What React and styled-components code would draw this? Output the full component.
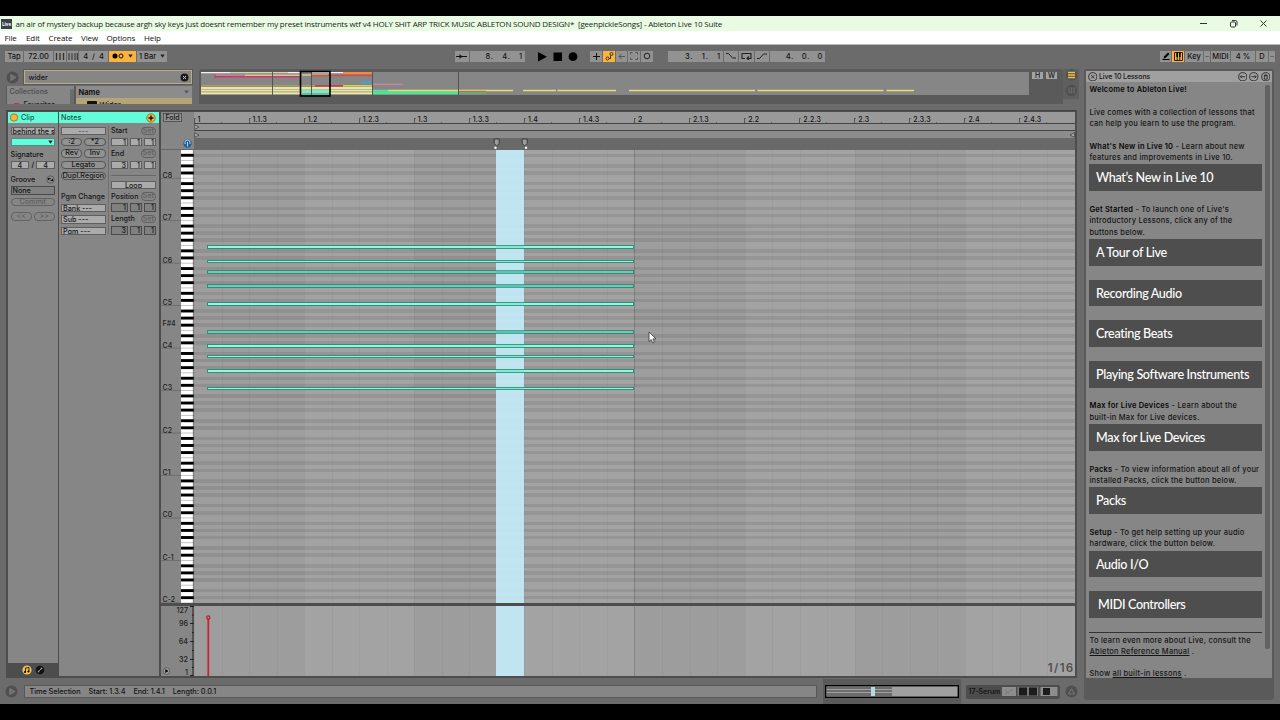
import React from 'react';
import styled, { createGlobalStyle } from 'styled-components';

const GlobalStyle = createGlobalStyle`
  * {
    box-sizing: border-box;
  }
  body {
    margin: 0;
    background: #000;
    font-family: Inter, 'Liberation Sans', sans-serif;
    font-size: 7.5px;
    font-weight: 500;
    color: #151515;
    overflow: hidden;
  }
  svg {
    display: block;
    flex: none;
  }
`;

const SEMI = 453 / 128;
const BEAT = 881 / 8;

/* ---------- window ---------- */

const Screen = styled.div`
  width: 1280px;
  height: 720px;
  padding: 16px 0;
  background: #000;
  overflow: hidden;
`;

const TitleBar = styled.div`
  height: 15px;
  background: #e9fbe3;
  display: flex;
  align-items: center;
  padding-left: 1px;
  font-family: 'Open Sans', sans-serif;
  font-weight: 400;
  font-size: 8px;
  color: #1c1c1c;
`;

const AppIcon = styled.div`
  width: 11px;
  height: 10px;
  background: #3a4148;
  color: #fff;
  font-size: 4.5px;
  font-weight: 700;
  line-height: 10px;
  text-align: center;
  margin-right: 3.5px;
`;

const Title = styled.div`
  flex: 1;
  white-space: pre;
  letter-spacing: -0.185px;
`;

const WindowButtons = styled.div`
  display: flex;
  gap: 21px;
  padding-right: 12.5px;
`;

const MenuBar = styled.div`
  height: 14px;
  background: #fff;
  border-bottom: 1px solid #bbb;
  display: flex;
  align-items: center;
  padding-left: 4.5px;
  font-family: 'Open Sans', sans-serif;
  font-weight: 400;
  font-size: 8px;
  letter-spacing: -0.1px;
  color: #111;
`;

const MenuItem = styled.div`
  width: ${(p) => p.$w}px;
`;

const Body = styled.div`
  height: 659px;
  background: #6b6b6b;
  display: flex;
  flex-direction: column;
`;

/* ---------- control bar ---------- */

const Toolbar = styled.div`
  height: 24px;
  flex: none;
  display: flex;
  align-items: center;
  padding: 0 5px 2px;
`;

const Group = styled.div`
  display: flex;
  gap: 1px;
  margin-left: ${(p) => p.$ml || 0}px;
`;

const Ctl = styled.div`
  width: ${(p) => p.$w}px;
  height: 11px;
  background: ${(p) => (p.$on ? '#fbb33c' : '#929292')};
  color: ${(p) => (p.$dim ? '#555' : '#151515')};
  display: flex;
  align-items: center;
  justify-content: ${(p) => p.$align || 'center'};
  padding-right: ${(p) => p.$pr || 0}px;
  gap: 2px;
  white-space: pre;
  letter-spacing: ${(p) => p.$track || 0}px;
`;

/* ---------- main split ---------- */

const Split = styled.div`
  flex: 1;
  min-height: 0;
  display: flex;
`;

const LeftSide = styled.div`
  width: 1084px;
  display: flex;
  flex-direction: column;
`;

const TopStrip = styled.div`
  height: 35px;
  display: flex;
  padding-left: 5.5px;
  overflow: hidden;
`;

const Browser = styled.div`
  width: 186px;
  display: flex;
  flex-direction: column;
`;

const SearchRow = styled.div`
  display: flex;
  align-items: center;
  gap: 5px;
  height: 16px;
  flex: none;
`;

const SearchBox = styled.div`
  flex: 1;
  height: 14px;
  background: #868686;
  border: 1px solid #b9ae82;
  outline: 1px solid #595959;
  display: flex;
  align-items: center;
  justify-content: space-between;
  padding: 0 2px 0 4px;
  font-size: 7.2px;
`;

const BrowserPanels = styled.div`
  display: flex;
  gap: 2px;
  flex: 1;
  margin-top: 1px;
  overflow: hidden;
  background: #595959;
`;

const CollectionPanel = styled.div`
  width: 68px;
  background: #868686;
  border-left: 1px solid #595959;
  padding: 0 0 0 3px;
  display: flex;
  justify-content: space-between;
  font-size: 7.2px;
`;

const CollectionRow = styled.div`
  height: ${(p) => (p.$item ? 14 : 12)}px;
  line-height: ${(p) => (p.$item ? 14 : 12)}px;
  display: flex;
  gap: 5px;
  align-items: center;
  color: ${(p) => (p.$item ? '#222' : '#4d4d4d')};
`;

const Swatch = styled.div`
  width: 5px;
  height: 5px;
  margin-left: 4px;
  background: #c8313d;
`;

const SmallScroll = styled.div`
  width: 4px;
  height: 24px;
  margin-top: 3px;
  border-radius: 2px;
  background: #6b6b6b;
`;

const NamePanel = styled.div`
  flex: 1;
  background: #868686;
`;

const NameHead = styled.div`
  height: 12px;
  display: flex;
  align-items: center;
  justify-content: space-between;
  padding: 0 3px;
  background: #8c8c8c;
`;

const NameItem = styled.div`
  height: 14px;
  display: flex;
  align-items: center;
  gap: 3px;
  padding-left: 11px;
  background: #b3a578;
`;

const ItemIcon = styled.div`
  width: 10px;
  height: 8px;
  border-radius: 1px;
  background: #111;
`;

const Overview = styled.div`
  width: 864px;
  margin-left: 7.5px;
  background: #5a5a5a;
  border-radius: 3px 3px 0 0;
  padding: 3px 0 0 2px;
  display: flex;
`;

const OverviewButton = styled.div`
  width: 11px;
  height: 7px;
  margin-left: 3px;
  background: #a3a3a3;
  line-height: 8px;
  text-align: center;
  font-size: 7px;
`;

const ViewToggles = styled.div`
  width: 16px;
  height: 30px;
  background: #5f5f5f;
  display: flex;
  flex-direction: column;
  align-items: center;
  gap: 2px;
`;

/* ---------- clip view ---------- */

const DetailView = styled.div`
  width: 1071px;
  height: 568px;
  margin: 6px 0 1px 6px;
  background: #4d4d4d;
  border-top: 1px solid #444;
  padding: 1px 2px 2px;
  display: flex;
  font-size: 7.2px;
`;

const ClipBox = styled.div`
  width: ${(p) => p.$w}px;
  flex: none;
  margin-right: ${(p) => p.$mr}px;
  display: flex;
  flex-direction: column;
`;

const BoxHead = styled.div`
  height: 11px;
  flex: none;
  background: #62fdd8;
  color: #15584a;
  display: flex;
  align-items: center;
  gap: 2px;
  padding: 0 3px 0 2px;
`;

const HeadLabel = styled.span`
  flex: 1;
`;

const BoxBody = styled.div`
  flex: 1;
  background: #868686;
  padding: ${(p) => p.$pad || '0'};
  display: flex;
`;

const Column = styled.div`
  width: ${(p) => p.$w}px;
  flex: none;
  padding-left: ${(p) => p.$pl || 0}px;
  margin-right: ${(p) => p.$mr || 0}px;
  height: ${(p) => (p.$h ? `${p.$h}px` : 'auto')};
  border-left: ${(p) => (p.$rule ? '1px solid #707070' : 'none')};
`;

const Line = styled.div`
  height: 11.33px;
  margin-top: ${(p) => p.$mt || 0}px;
  display: flex;
  align-items: center;
  justify-content: space-between;
  gap: 2px;
  white-space: nowrap;
`;

const Field = styled.div`
  flex: ${(p) => p.$grow || 1};
  height: 8.5px;
  line-height: 7px;
  border: 1px solid ${(p) => (p.$dark ? '#4a4a4a' : '#5f5f5f')};
  background: ${(p) => (p.$dark ? '#808080' : '#ababab')};
  text-align: ${(p) => p.$align || 'left'};
  padding: 0 1px;
  overflow: hidden;
  color: ${(p) => (p.$dim ? '#555' : '#151515')};
`;

const ColorField = styled.div`
  flex: 1;
  height: 8px;
  background: #62fdd8;
  border: 1px solid #4f8f80;
  display: flex;
  align-items: center;
  justify-content: flex-end;
  padding-right: 1px;
`;

const Pill = styled.div`
  flex: ${(p) => (p.$w ? 'none' : 1)};
  width: ${(p) => (p.$w ? `${p.$w}px` : 'auto')};
  height: 8.5px;
  line-height: 6.8px;
  border: 1px solid ${(p) => (p.$dim ? '#626262' : '#555')};
  border-radius: 4px;
  background: ${(p) => (p.$dim ? '#868686' : '#929292')};
  color: ${(p) => (p.$dim ? '#606060' : '#151515')};
  text-align: center;
`;

const Divider = styled.div`
  height: 1px;
  flex: 1;
  background: #666;
`;

const ClipFoot = styled.div`
  height: 13px;
  background: #4d4d4d;
  display: flex;
  align-items: center;
  gap: 3px;
  padding-left: 14px;
`;

/* ---------- piano roll ---------- */

const Roll = styled.div`
  width: 913.5px;
  flex: none;
  display: flex;
  flex-direction: column;
`;

const RollTop = styled.div`
  height: 491px;
  display: flex;
  background: #868686;
`;

const KeySide = styled.div`
  width: 32.5px;
  flex: none;
  display: flex;
  flex-direction: column;
`;

const KeyHead = styled.div`
  height: 38px;
  display: flex;
  flex-direction: column;
  justify-content: space-between;
  align-items: flex-end;
  border-bottom: 1px solid #666;
`;

const Fold = styled.div`
  align-self: flex-start;
  margin: 1px 0 0 2px;
  width: 19px;
  height: 9px;
  line-height: 7.5px;
  border: 1px solid #555;
  background: #929292;
  text-align: center;
  font-size: 7px;
`;

const Canvas = styled.div`
  width: 881px;
  display: flex;
  flex-direction: column;
`;

const Ruler = styled.div`
  height: 12px;
  flex: none;
  background: #999;
  border-bottom: 1px solid #444;
  display: flex;
  align-items: flex-end;
`;

const RulerCell = styled.div`
  flex: 1;
  height: 5px;
  padding-left: 4px;
  line-height: 4px;
  font-size: 7px;
  letter-spacing: 0.15px;
  background:
    linear-gradient(#555, #555) 0 0 / 1px 5px no-repeat,
    linear-gradient(#666, #666) 0 0 / 2px 1px no-repeat,
    linear-gradient(#666, #666) 50% 100% / 1px 1px no-repeat;
`;

const MarkerLane = styled.div`
  height: 7px;
  flex: none;
  background: ${(p) => (p.$rule ? '#949494' : '#8c8c8c')};
  border-bottom: ${(p) => (p.$rule ? '1px solid #444' : 'none')};
  display: flex;
  justify-content: space-between;
  align-items: center;
`;

const LoopLane = styled.div`
  height: 12px;
  flex: none;
  background: #696969;
  padding-left: 299px;
`;

const Grid = styled.div`
  position: relative;
  height: 453px;
  overflow: hidden;
  background-color: #a1a1a1;
`;

const RowShade = styled.div`
  position: absolute;
  left: 0;
  right: 0;
  top: ${(p) => p.$top}px;
  height: ${SEMI}px;
  background: rgba(0, 0, 0, 0.085);
`;

const BeatShade = styled.div`
  position: absolute;
  inset: 0;
  background:
    linear-gradient(rgba(0, 0, 0, 0.14), rgba(0, 0, 0, 0.14)) ${BEAT * 4}px 0 / 1px 100% no-repeat,
    repeating-linear-gradient(90deg, rgba(0, 0, 0, 0.035) 0 1px, transparent 1px ${BEAT / 4}px),
    repeating-linear-gradient(
      90deg,
      rgba(0, 0, 0, 0.025) 0 ${BEAT}px,
      rgba(255, 255, 255, 0.025) ${BEAT}px ${BEAT * 2}px
    );
`;

const Selection = styled.div`
  position: absolute;
  top: 0;
  bottom: 0;
  left: ${(BEAT * 11) / 4 - 0.4}px;
  width: ${BEAT / 4 + 0.8}px;
  background: ${(p) => (p.$flat ? '#c0e5f1' : 'rgba(196, 236, 249, 0.9)')};
`;

const Note = styled.div`
  position: absolute;
  left: 13px;
  width: 427px;
  height: ${(p) => p.$h}px;
  border: 1px solid #2f8f78;
  background: ${(p) => (p.$soft ? '#7fc3ae' : '#97f6da')};
`;

const NoteSelected = styled.div`
  position: absolute;
  left: ${(BEAT * 11) / 4 - 14}px;
  width: ${BEAT / 4}px;
  top: -1px;
  bottom: -1px;
  background: ${(p) => (p.$soft ? 'rgba(80, 190, 180, 0.6)' : 'rgba(80, 200, 190, 0.25)')};
`;

const Cursor = styled.svg`
  position: absolute;
  left: 454px;
  top: 181px;
`;

const VelocityRow = styled.div`
  height: 70px;
  margin-top: 3px;
  display: flex;
  background: #868686;
`;

const VelocityPane = styled.div`
  position: relative;
  width: 881px;
  background: #a1a1a1;
`;

const GridSize = styled.div`
  position: absolute;
  right: 0;
  bottom: 1px;
  font-size: 11.5px;
  font-weight: 600;
  letter-spacing: 1.3px;
  line-height: 13px;
  color: #505050;
`;

/* ---------- status ---------- */

const Status = styled.div`
  height: 25px;
  display: flex;
  align-items: center;
  padding-left: 5px;
`;

const StatusText = styled.div`
  width: 793px;
  height: 13px;
  flex: none;
  margin-left: 5.5px;
  border: 1px solid #585858;
  background: #868686;
  padding-left: 5px;
  line-height: 11px;
  display: flex;
  gap: 8px;
  font-size: 7.3px;
  letter-spacing: -0.05px;
`;

const ClipMini = styled.div`
  width: 138px;
  height: 25px;
  flex: none;
  margin-left: 6px;
  background: #5a5a5a;
  display: flex;
  align-items: center;
  justify-content: center;
`;

const DeviceBox = styled.div`
  width: 94px;
  height: 14px;
  flex: none;
  margin: 0 5.5px 0 5px;
  border-radius: 2px;
  background: #4d4d4d;
  display: flex;
  align-items: center;
  justify-content: space-between;
  padding: 0 2px 0 3px;
  font-size: 6.9px;
  font-weight: 600;
`;

/* ---------- help ---------- */

const Help = styled.div`
  width: 190px;
  height: 631px;
  background: #5a5a5a;
  border-radius: 3px;
  padding: 2px;
`;

const HelpHead = styled.div`
  height: 11px;
  background: #a0a0a0;
  display: flex;
  align-items: center;
  gap: 2px;
  padding: 0 2px 0 1.5px;
  font-size: 7px;
  letter-spacing: -0.1px;
`;

const HelpBody = styled.div`
  height: 596px;
  background: #868686;
  display: flex;
  overflow: hidden;
`;

const HelpText = styled.div`
  width: 173px;
  margin: 2px 3px 0 3px;
`;

const Para = styled.div`
  line-height: 11.33px;
  padding-left: 0.5px;
  margin-bottom: ${(p) => p.$mb}px;
  white-space: pre;
  letter-spacing: 0.22px;
  b {
    font-weight: 600;
    color: #080808;
  }
  u {
    text-underline-offset: 1px;
  }
`;

const LessonButton = styled.div`
  height: 26.5px;
  line-height: 27.5px;
  margin-bottom: ${(p) => p.$mb}px;
  padding-left: ${(p) => p.$pl || 7}px;
  background: #4e4e4e;
  color: #fff;
  font-family: Lato, sans-serif;
  font-size: 12.6px;
  letter-spacing: -0.34px;
  white-space: nowrap;
`;

const Rule = styled.div`
  height: 1px;
  background: #333;
  margin-bottom: 2px;
`;

const HelpScroll = styled.div`
  width: 4.5px;
  height: 564px;
  margin-top: 3px;
  border-radius: 2px;
  background: #626262;
`;

const isBlack = (n) => [1, 3, 6, 8, 10].includes(n % 12);
const pitches = Array.from({ length: 128 }, (_, i) => i);
const yOf = (n) => 453 - (n + 1) * SEMI;

const notes = [
  { n: 100, h: 4 },
  { n: 96, h: 3, dy: 1 },
  { n: 93, h: 4, soft: true },
  { n: 89, h: 4, soft: true },
  { n: 84, h: 4 },
  { n: 76, h: 4, soft: true },
  { n: 72, h: 4 },
  { n: 69, h: 3 },
  { n: 65, h: 4 },
  { n: 60, h: 3 },
];

const rulerLabels = [
  '1', '1.1.3', '1.2', '1.2.3', '1.3', '1.3.3', '1.4', '1.4.3',
  '2', '2.1.3', '2.2', '2.2.3', '2.3', '2.3.3', '2.4', '2.4.3',
];

const menu = [['File', 21.5], ['Edit', 22.5], ['Create', 32.5], ['View', 25.5], ['Options', 37.5], ['Help', 30]];

const Keyboard = () => (
  <svg width="32.5" height="453" fontFamily="Inter" fontSize="7">
    <rect x="20" width="13" height="453" fill="#fff" />
    {pitches.filter((n) => n % 12 === 0 || n % 12 === 5).map((n) => (
      <rect key={n} x="20" y={yOf(n) + SEMI - 0.5} width="13" height="0.8" fill="#b8b8b8" />
    ))}
    {pitches.filter(isBlack).map((n) => (
      <rect key={n} x="20" y={yOf(n) + 0.3} width="13" height="2.9" fill="#000" />
    ))}
    {pitches.filter((n) => n % 12 === 0).map((n) => (
      <g key={n}>
        <rect y={yOf(n) + SEMI - 0.5} width="20" height="0.8" fill="#6a6a6a" />
        <text x="1.5" y={yOf(n) + SEMI - 0.6} fill="#222">{`C${n / 12 - 2}`}</text>
      </g>
    ))}
    <text x="1.5" y="176.4" fill="#222">F#4</text>
    <rect x="31.9" width="0.7" height="453" fill="#333" />
  </svg>
);

const VelocityAxis = () => (
  <svg width="32.5" height="70" fontFamily="Inter" fontSize="7.2" textAnchor="end" fill="#222">
    <path d="M32 0V70M29 .5h4M29 17.5h4M29 35.5h4M29 53.5h4M29 69.5h4M31 9h2M31 26.5h2M31 44.5h2M31 61.5h2" stroke="#222" fill="none" />
    <text x="27" y="6.6">127</text>
    <text x="27" y="20">96</text>
    <text x="27" y="38">64</text>
    <text x="27" y="55.7">32</text>
    <text x="27" y="69">1</text>
    <circle cx="5.5" cy="65" r="3.3" fill="#a0a0a0" stroke="#555" strokeWidth=".8" />
    <path d="M4.3 63l3.2 2-3.2 2z" fill="#000" />
  </svg>
);

const PlayDisc = ({ up }) => (
  <svg width="13" height="13">
    <circle cx="6.5" cy="6.5" r="6" fill="#505050" />
    <path d={up ? 'M3.5 9L6.5 3.7 9.5 9z' : 'M4.8 3.5L10 6.5 4.8 9.5z'} fill={up ? 'none' : '#6f6f6f'} stroke="#7a7a7a" strokeWidth=".9" />
  </svg>
);

const OverviewMap = () => (
  <svg width="828" height="25" viewBox="201 71 828 25" style={{ marginTop: -1, overflow: 'visible' }}>
    <rect x="201" y="72" width="828" height="23" fill="#868686" />
    <path d="M201 72.6h29M288 72.6h12M312 72.6h31" stroke="#f6f0f0" strokeWidth="1.2" />
    <path d="M230 72.6h58" stroke="#ddcfae" strokeWidth="1.2" />
    <path d="M215 75h30" stroke="#cf8ba4" />
    <path d="M245 75.2h55M302 75h26" stroke="#d5c88e" strokeWidth="1.6" />
    <path d="M215 76.8h85" stroke="#c9386f" strokeWidth="1.4" />
    <path d="M215 74v4" stroke="#c9386f" />
    <path d="M343 73h29" stroke="#f08a3c" strokeWidth="2" />
    <path d="M312 75.5h60" stroke="#d3503f" strokeWidth="1.6" />
    <path d="M361 82.2h10" stroke="#4f9bd0" strokeWidth="2.4" />
    <path d="M201 85.8h114" stroke="#b9a94f" strokeWidth="1" />
    <path d="M315 85.8h28" stroke="#c93a46" strokeWidth="1.4" />
    <path d="M343 85.8h29" stroke="#cfe04e" strokeWidth="1.4" />
    <path d="M201 88h171M201 90.5h171M201 93.3h171" stroke="#ece5a3" strokeWidth="1.9" />
    <path d="M302 91h28" stroke="#84e6bd" strokeWidth="3" />
    <path d="M302 94h28" stroke="#5bbfae" strokeWidth="2" />
    <path d="M372 84.2h31" stroke="#d585a2" strokeWidth="1.2" />
    <path d="M372 90.6h16" stroke="#64e08a" strokeWidth="1.6" />
    <path d="M372 92.7h86" stroke="#4fe39b" strokeWidth="3" />
    <path d="M388 90.5h125M523 90.5h33M557.5 90.5h58.5M629 90.5h126M757.5 90.5h126M886.5 90.5h27.5" stroke="#e4e070" strokeWidth="1.5" />
    <path d="M458 91.3h28" stroke="#bb6541" strokeWidth="1" />
    <path d="M458 93h28" stroke="#66b183" strokeWidth="1.6" />
    <path d="M272.5 72v23M311.5 72v23M372.5 72v23M458.5 72v23" stroke="#4d4d4d" strokeWidth=".9" />
    <rect x="300.5" y="71.5" width="29.5" height="24.5" fill="none" stroke="#000" strokeWidth="1.6" />
  </svg>
);

const Marker = () => (
  <svg width="36" height="12">
    {[3.5, 31.5].map((x) => (
      <g key={x} transform={`translate(${x - 3} 0)`}>
        <path d="M.7 1h5v4.5L3.2 7.900.7 5.500z" fill="#9c9c9c" stroke="#333" strokeWidth=".9" />
        <circle cx={x < 10 ? 2 : 4.5} cy="9.8" r="1.2" fill="#fff" />
      </g>
    ))}
  </svg>
);

const Caret = ({ color = '#222' }) => (
  <svg width="5" height="4"><path d="M.3.5h4.4L2.5 3.7z" fill={color} /></svg>
);

const LaneArrow = ({ flip }) => (
  <svg width="6" height="6"><path d={flip ? 'M5.5.6L1 3l4.5 2.4z' : 'M.6.6L5 3 .6 5.4z'} fill="#aaa" stroke="#444" strokeWidth=".8" /></svg>
);

const HelpIcon = ({ d }) => (
  <svg width="9.5" height="9.5" viewBox="0 0 10 10" fill="none" stroke="#222" strokeWidth=".9">
    <circle cx="5" cy="5" r="4.3" />
    <path d={d} />
  </svg>
);

const ControlBar = () => (
  <Toolbar>
    <Group>
      <Ctl $w={18}>Tap</Ctl>
      <Ctl $w={29}>72.00</Ctl>
      <Ctl $w={12}>
        <svg width="10" height="7"><path d="M1.5 0v7M5 0v7M8.5 0v7" stroke="#333" strokeWidth="1.3" /></svg>
      </Ctl>
      <Ctl $w={11}>
        <svg width="10" height="7"><path d="M1 0v7M4 0v7M7 0v7M9.3 0v7" stroke="#333" strokeWidth="1.1" /></svg>
      </Ctl>
      <Ctl $w={29}>4  /  4</Ctl>
      <Ctl $w={27} $on>
        <svg width="12" height="6"><circle cx="3" cy="3" r="2.5" /><circle cx="9" cy="3" r="2" fill="none" stroke="#111" /></svg>
        <span />
        <Caret />
      </Ctl>
      <Ctl $w={30}>1 Bar <Caret /></Ctl>
    </Group>
    <Group $ml={287.5}>
      <Ctl $w={14}>
        <svg width="11" height="7" stroke="#111" fill="none"><path d="M0 3.5h11" /><path d="M3.5 1.2v4.6l3.2-2.3z" fill="#111" stroke="none" /></svg>
      </Ctl>
      <Ctl $w={55} $align="flex-end" $pr={1.5} $track={0.8}>8.   4.   1</Ctl>
    </Group>
    <Group $ml={12.5}>
      <svg width="42" height="11">
        <path d="M1 1l9 4.7-9 4.7z" />
        <rect x="16.5" y="1.5" width="8.5" height="8.5" />
        <circle cx="36" cy="5.7" r="4.4" />
      </svg>
    </Group>
    <Group $ml={11}>
      <Ctl $w={12}><svg width="7" height="7"><path d="M3.5 0v7M0 3.5h7" stroke="#111" /></svg></Ctl>
      <Ctl $w={12} $on>
        <svg width="9" height="9" fill="none" stroke="#333"><circle cx="2.5" cy="6.5" r="1.5" /><circle cx="6.5" cy="2" r="1.5" /><path d="M4 6.5h1.5v-3" /></svg>
      </Ctl>
      <Ctl $w={11}><svg width="7" height="7" fill="none" stroke="#555"><path d="M7 3.5H1M3.5 1L1 3.5 3.5 6" /></svg></Ctl>
      <Ctl $w={12}><svg width="8" height="8" fill="none" stroke="#555"><path d="M.5 2.5v-2h2M5.5.5h2v2M7.5 5.5v2h-2M2.5 7.5h-2v-2" /></svg></Ctl>
      <Ctl $w={12}><svg width="8" height="8"><circle cx="4" cy="4" r="2.8" fill="none" stroke="#222" /></svg></Ctl>
    </Group>
    <Group $ml={15}>
      <Ctl $w={55} $align="flex-end" $pr={2} $track={0.8}>3.   1.   1</Ctl>
      <Ctl $w={14}><svg width="10" height="8"><path d="M0 1.5h2.5L6.5 6H10" fill="none" stroke="#222" /></svg></Ctl>
      <Ctl $w={15}><svg width="11" height="8"><path d="M4 6.5H1v-5h9v5H6.5M8 4.5l-2 2 2 1.5" fill="none" stroke="#222" strokeWidth="1.1" /></svg></Ctl>
      <Ctl $w={14}><svg width="10" height="8"><path d="M0 6.5h2.5L6.5 2H10" fill="none" stroke="#222" /></svg></Ctl>
      <Ctl $w={55} $align="flex-end" $pr={2} $track={0.6}>4.   0.   0</Ctl>
    </Group>
    <Group $ml={335}>
      <Ctl $w={11}><svg width="8" height="8"><path d="M.5 7.5h7" stroke="#000" /><path d="M1.5 6.5l.5-2L6 .5 7.5 2 3.5 6z" /></svg></Ctl>
      <Ctl $w={12} $on><svg width="9" height="9"><path d="M.5.5h8v8h-8zM3.2.5v8M5.8.5v8" fill="none" stroke="#222" /><path d="M2.4.5h1.6v4.5H2.4zM5 .5h1.6v4.5H5z" /></svg></Ctl>
      <Ctl $w={18}>Key</Ctl>
      <Ctl $w={6} $dim>–</Ctl>
      <Ctl $w={19}>MIDI</Ctl>
      <Ctl $w={24}>4 %</Ctl>
      <Ctl $w={12}>D</Ctl>
      <Ctl $w={6} $dim>–</Ctl>
    </Group>
  </Toolbar>
);

const BrowserArea = () => (
  <Browser>
    <SearchRow>
      <PlayDisc />
      <SearchBox>
        <span>wider</span>
        <svg width="9" height="9"><circle cx="4.5" cy="4.5" r="4" fill="#1a1a1a" /><path d="M3 3l3 3M6 3L3 6" stroke="#ccc" /></svg>
      </SearchBox>
    </SearchRow>
    <BrowserPanels>
      <CollectionPanel>
        <div>
          <CollectionRow>Collections</CollectionRow>
          <CollectionRow $item><Swatch />Favorites</CollectionRow>
        </div>
        <SmallScroll />
      </CollectionPanel>
      <NamePanel>
        <NameHead><b>Name</b><Caret color="#555" /></NameHead>
        <NameItem><ItemIcon />Wider</NameItem>
      </NamePanel>
    </BrowserPanels>
  </Browser>
);

const Triple = ({ values, dark }) => (
  <Line>
    <Field $grow={1.6} $align="right" $dark={dark}>{values[0]}</Field>
    <Field $align="right" $dark={dark}>{values[1]}</Field>
    <Field $align="right" $dark={dark}>{values[2]}</Field>
  </Line>
);

const SetLine = ({ label }) => (
  <Line><span>{label}</span><Pill $w={15.5} $dim>Set</Pill></Line>
);

const ClipPanel = () => (
  <ClipBox $w={50} $mr={1}>
    <BoxHead>
      <svg width="9" height="9"><circle cx="4" cy="4.5" r="3.7" fill="#f5b53c" stroke="#80631f" strokeWidth=".7" /></svg>
      <HeadLabel>Clip</HeadLabel>
    </BoxHead>
    <BoxBody $pad="2.2px 3px 0 2.5px">
      <Column $w={44.5}>
        <Line><Field>behind the sce</Field></Line>
        <Line><ColorField><Caret /></ColorField></Line>
        <Line $mt={1}><span>Signature</span></Line>
        <Line $mt={-1}><Field $align="center">4</Field>/<Field $align="center">4</Field></Line>
        <Line $mt={3.2}>
          <span>Groove</span>
          <svg width="9" height="9" fill="none"><circle cx="4.5" cy="4.5" r="3.7" stroke="#555" strokeWidth=".8" /><path d="M2.5 5V3.5h2M6.5 4v1.5h-2" stroke="#111" strokeWidth="1.2" /></svg>
        </Line>
        <Line><Field $dark>None</Field></Line>
        <Line><Pill $dim>Commit</Pill></Line>
        <Line $mt={3}><Pill $dim>&lt;&lt;</Pill><Pill $dim>&gt;&gt;</Pill></Line>
      </Column>
    </BoxBody>
    <ClipFoot>
      <svg width="10" height="10"><circle cx="5" cy="5" r="4.6" fill="#f5c04c" /><path d="M3.5 7V3l3.500-.5V6.5" fill="none" stroke="#222" /><circle cx="3" cy="7" r="1" /><circle cx="6.4" cy="6.5" r="1" /></svg>
      <svg width="10" height="10"><circle cx="5" cy="5" r="4.3" fill="#111" /><path d="M3.5 6.5L6.5 3.5" stroke="#888" /><circle cx="3.5" cy="6.5" r=".9" fill="#999" /><circle cx="6.5" cy="3.5" r=".9" fill="#999" /></svg>
    </ClipFoot>
  </ClipBox>
);

const NotesPanel = () => (
  <ClipBox $w={100} $mr={2}>
    <BoxHead>
      <HeadLabel>Notes</HeadLabel>
      <svg width="10" height="10"><circle cx="5" cy="5" r="4.2" fill="#f5b53c" stroke="#80631f" strokeWidth=".8" /><path d="M5 2.5v5M2.5 5h5" stroke="#111" strokeWidth="1.4" /></svg>
    </BoxHead>
    <BoxBody $pad="2.2px 3px 0 2px">
      <Column $w={44.5} $mr={2.5}>
        <Line><Field $align="center" $dim>---</Field></Line>
        <Line><Pill>:2</Pill><Pill>*2</Pill></Line>
        <Line><Pill>Rev</Pill><Pill>Inv</Pill></Line>
        <Line><Pill>Legato</Pill></Line>
        <Line><Pill>Dupl.Region</Pill></Line>
        <Line $mt={9.3}><span>Pgm Change</span></Line>
        <Line><Field>Bank ---</Field></Line>
        <Line><Field>Sub ---</Field></Line>
        <Line><Field>Pgm ---</Field></Line>
      </Column>
      <Column $w={48} $pl={2} $h={109} $rule>
        <SetLine label="Start" />
        <Triple values={[1, 1, 1]} />
        <SetLine label="End" />
        <Triple values={[3, 1, 1]} />
        <Line $mt={-1}><Divider /></Line>
        <Line $mt={-1.5}><Field $align="center">Loop</Field></Line>
        <SetLine label="Position" />
        <Triple values={[1, 1, 1]} dark />
        <SetLine label="Length" />
        <Triple values={[3, 1, 1]} dark />
      </Column>
    </BoxBody>
  </ClipBox>
);

const PianoRoll = () => (
  <Roll>
    <RollTop>
      <KeySide>
        <KeyHead>
          <Fold>Fold</Fold>
          <svg width="12" height="11"><circle cx="5.5" cy="5.5" r="4.2" fill="#1e5f9e" /><path d="M3 6V4.5a2.5 2.5 0 015 0V6M5.5 4v4.5" stroke="#cfe2f2" fill="none" strokeWidth=".9" /></svg>
        </KeyHead>
        <Keyboard />
      </KeySide>
      <Canvas>
        <Ruler>{rulerLabels.map((l) => <RulerCell key={l}>{l}</RulerCell>)}</Ruler>
        <MarkerLane $rule><LaneArrow /></MarkerLane>
        <MarkerLane><LaneArrow /><LaneArrow flip /></MarkerLane>
        <LoopLane><Marker /></LoopLane>
        <Grid>
          {pitches.filter(isBlack).map((n) => <RowShade key={n} $top={yOf(n)} />)}
          <BeatShade />
          <Selection />
          {notes.map(({ n, h, soft, dy = 0 }) => (
            <Note key={n} $h={h} $soft={soft} style={{ top: Math.floor(yOf(n)) + dy }}><NoteSelected $soft={soft} /></Note>
          ))}
          <Cursor width="9" height="13">
            <path d="M1 1v9.5l2.2-2 1.5 3.3 1.7-.8-1.5-3.1H8z" fill="#fff" stroke="#333" strokeWidth=".8" />
          </Cursor>
        </Grid>
      </Canvas>
    </RollTop>
    <VelocityRow>
      <VelocityAxis />
      <VelocityPane>
        <BeatShade />
        <Selection $flat />
        <svg width="30" height="70">
          <path d="M14.3 13v57" stroke="#cc2435" strokeWidth="1.8" />
          <circle cx="14.3" cy="11.5" r="1.6" fill="#c98a90" stroke="#c01a2e" strokeWidth="1.2" />
        </svg>
        <GridSize>1/16</GridSize>
      </VelocityPane>
    </VelocityRow>
  </Roll>
);

const StatusBar = () => (
  <Status>
    <PlayDisc />
    <StatusText>
      <span>Time Selection</span>
      <span>Start: 1.3.4</span>
      <span>End: 1.4.1</span>
      <span>Length: 0.0.1</span>
    </StatusText>
    <ClipMini>
      <svg width="134" height="13">
        <rect x=".7" y=".7" width="132.6" height="11.6" fill="#a0a0a0" stroke="#000" strokeWidth="1.4" />
        <rect x="2" y="2" width="65" height="9" fill="#6b6b6b" />
        <path d="M2 4.5h65M2 7.5h65" stroke="#a6a6a6" strokeWidth=".9" />
        <rect x="46" y="2" width="4" height="9" fill="#b5dbe0" />
      </svg>
    </ClipMini>
    <DeviceBox>
      17-Serum
      <svg width="56" height="9">
        <rect width="14" height="9" fill="#8d8d8d" />
        <path d="M3 7l8-5M3 3l4 4" stroke="#777" />
        <rect x="15.5" width="20.5" height="9" fill="#777" />
        <path d="M17 .5h8v8h-8zM27 .5h8v8h-8z" fill="#1c1c1c" />
        <rect x="38.5" width="17" height="9" fill="#8d8d8d" />
        <rect x="41" y="1" width="7" height="7" fill="#1c1c1c" />
      </svg>
    </DeviceBox>
    <PlayDisc up />
  </Status>
);

const Lessons = () => (
  <Help>
    <HelpHead>
      <HelpIcon d="M3.3 3.3l3.4 3.4M6.7 3.3L3.3 6.7" />
      <HeadLabel>Live 10 Lessons</HeadLabel>
      <HelpIcon d="M7.5 5h-5M4 3.5L2.5 5 4 6.5" />
      <HelpIcon d="M2.5 5h5M6 3.5L7.5 5 6 6.5" />
      <HelpIcon d="M3.5 7.5v-4h3v4zM3.5 4h3M4.5 2.5h1" />
    </HelpHead>
    <HelpBody>
      <HelpText>
        <Para $mb={11.3}><b>Welcome to Ableton Live!</b></Para>
        <Para $mb={11.3}>{'Live comes with a collection of lessons that\ncan help you learn to use the program.'}</Para>
        <Para $mb={1}><b>What's New in Live 10</b>{' - Learn about new\nfeatures and improvements in Live 10.'}</Para>
        <LessonButton $mb={13.3}>What’s New in Live 10</LessonButton>
        <Para $mb={1.2}><b>Get Started</b>{' - To launch one of Live\'s\nintroductory Lessons, click any of the\nbuttons below.'}</Para>
        <LessonButton $mb={14}>A Tour of Live</LessonButton>
        <LessonButton $mb={14.2}>Recording Audio</LessonButton>
        <LessonButton $mb={14.2}>Creating Beats</LessonButton>
        <LessonButton $mb={12.9}>Playing Software Instruments</LessonButton>
        <Para $mb={1}><b>Max for Live Devices</b>{' - Learn about the\nbuilt-in Max for Live devices.'}</Para>
        <LessonButton $mb={13.2}>Max for Live Devices</LessonButton>
        <Para $mb={1}><b>Packs</b>{' - To view information about all of your\ninstalled Packs, click the button below.'}</Para>
        <LessonButton $mb={13.2}>Packs</LessonButton>
        <Para $mb={1}><b>Setup</b>{' - To get help setting up your audio\nhardware, click the button below.'}</Para>
        <LessonButton $mb={14}>Audio I/O</LessonButton>
        <LessonButton $mb={14} $pl={9}>MIDI Controllers</LessonButton>
        <Rule />
        <Para $mb={11}>{'To learn even more about Live, consult the\n'}<u>Ableton Reference Manual</u> .</Para>
        <Para $mb={0}>Show <u>all built-in lessons</u> .</Para>
      </HelpText>
      <HelpScroll />
    </HelpBody>
  </Help>
);

const App = () => (
  <>
    <GlobalStyle />
    <Screen>
      <TitleBar>
        <AppIcon>Live</AppIcon>
        <Title>{'an air of mystery backup because argh sky keys just doesnt remember my preset instruments wtf v4 HOLY SHIT ARP TRICK MUSIC ABLETON SOUND DESIGN*  [geenpickleSongs] - Ableton Live 10 Suite'}</Title>
        <WindowButtons>
          <svg width="9" height="9"><path d="M1 4.5h7" stroke="#333" /></svg>
          <svg width="9" height="9" fill="none" stroke="#333"><rect x="1.5" y="3" width="5" height="5" rx="1" /><path d="M3 1.5h3.5a1.5 1.5 0 011.5 1.5v3.5" /></svg>
          <svg width="9" height="9"><path d="M1.5 1.5l6 6M7.5 1.5l-6 6" stroke="#333" /></svg>
        </WindowButtons>
      </TitleBar>
      <MenuBar>
        {menu.map(([label, w]) => <MenuItem key={label} $w={w}>{label}</MenuItem>)}
      </MenuBar>
      <Body>
        <ControlBar />
        <Split>
          <LeftSide>
            <TopStrip>
              <BrowserArea />
              <Overview>
                <OverviewMap />
                <OverviewButton>H</OverviewButton>
                <OverviewButton>W</OverviewButton>
              </Overview>
              <ViewToggles>
                <svg width="13" height="13"><circle cx="6.5" cy="6" r="5.7" fill="#56524a" /><path d="M3 3.5h7M3 6h7M3 8.5h7" stroke="#eac04e" strokeWidth="1.5" /></svg>
                <svg width="13" height="13"><circle cx="6.5" cy="6.5" r="5.7" fill="#505050" /><path d="M4 3.5v6M6.5 3.5v6M9 3.5v6" stroke="#6b6b6b" strokeWidth="1.3" /></svg>
              </ViewToggles>
            </TopStrip>
            <DetailView>
              <ClipPanel />
              <NotesPanel />
              <PianoRoll />
            </DetailView>
            <StatusBar />
          </LeftSide>
          <Lessons />
        </Split>
      </Body>
    </Screen>
  </>
);

export default App;
